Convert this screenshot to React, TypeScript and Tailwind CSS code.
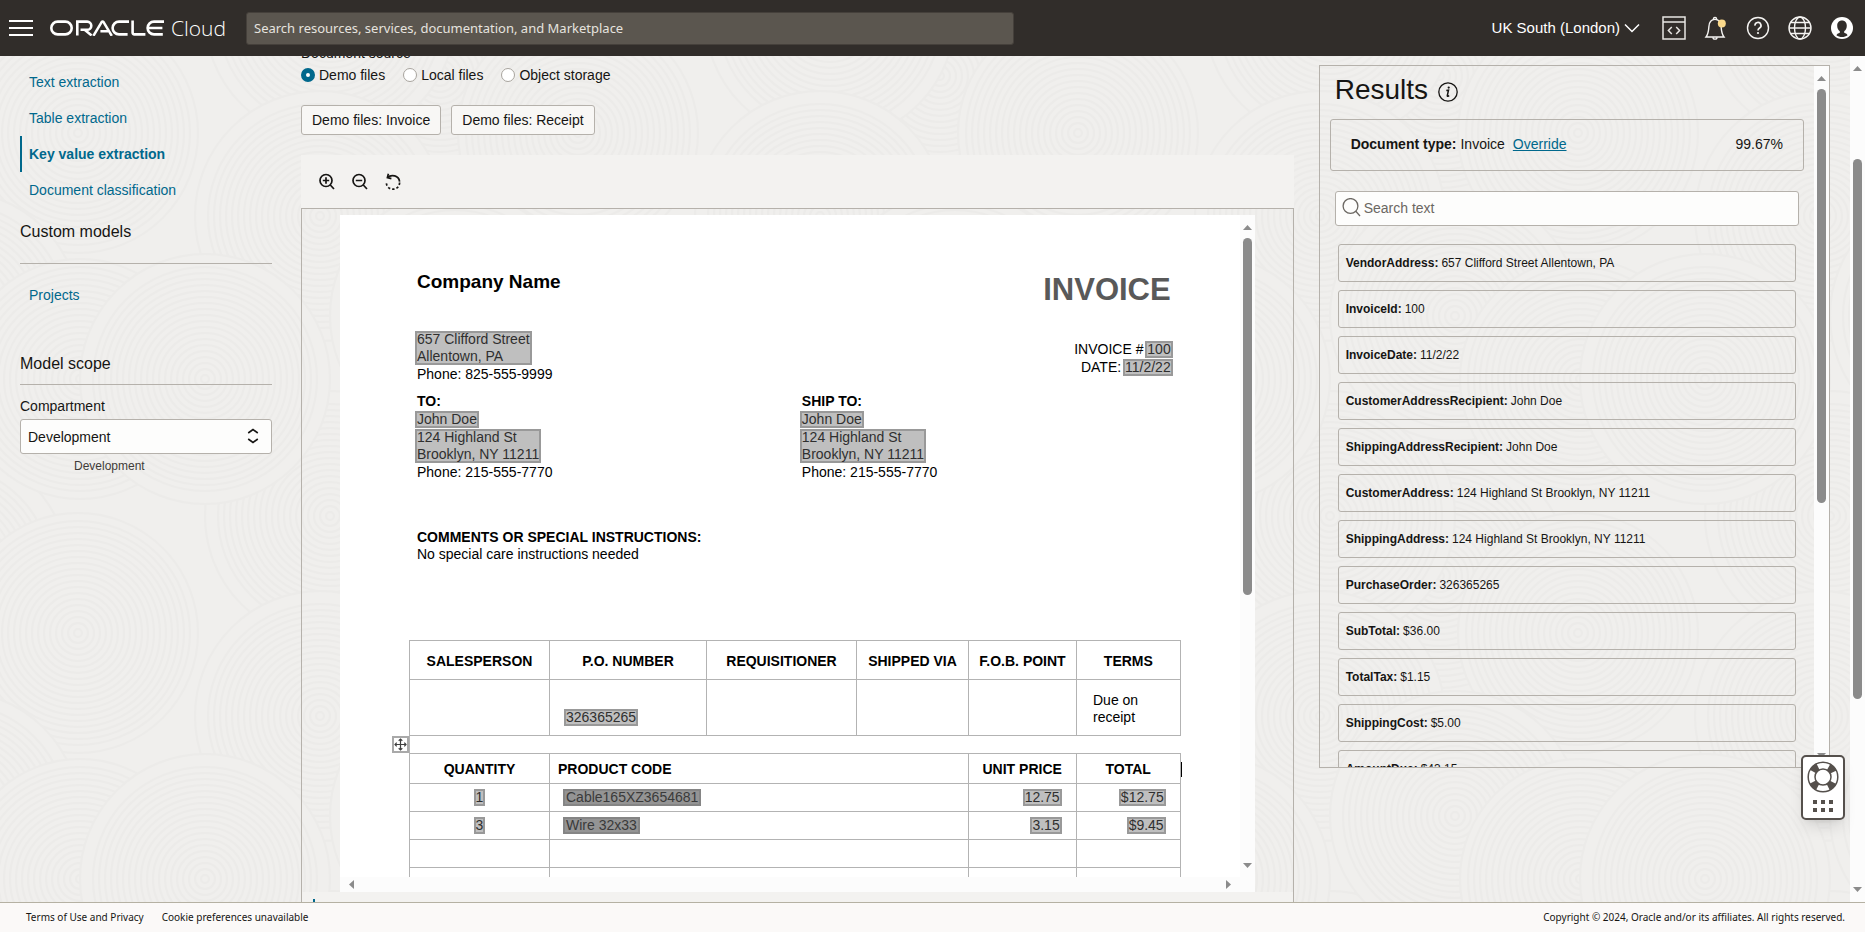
import type { ReactNode } from "react";

const disks = [
  { x: 440, y: 20, r: 130 },
  { x: 330, y: 460, r: 125 },
  { x: 78, y: 77, r: 120 },
  { x: 320, y: 160, r: 125 },
  { x: 455, y: 260, r: 125 },
  { x: 80, y: 323, r: 120 },
  { x: 205, y: 323, r: 125 },
];
const rings = [4, 10, 16, 22, 28, 34, 40, 46, 52, 58, 64, 70, 76, 82, 88, 94, 100, 106, 112];

function Texture() {
  return (
    <svg className="absolute inset-0 h-full w-full" aria-hidden="true">
      <defs>
        <pattern id="swirls" width="500" height="500" patternUnits="userSpaceOnUse">
          <rect width="500" height="500" fill="#f0efed" />
          {disks.map((d) =>
            [-500, 0, 500].map((dx) =>
              [-500, 0, 500].map((dy) => (
                <g key={`${d.x}${dx}${dy}`} fill="none" stroke="#ecebe9" strokeWidth="2">
                  <circle cx={d.x + dx} cy={d.y + dy} r={d.r} fill="#f0efed" />
                  {rings.map((r) => (
                    <circle key={r} cx={d.x + dx} cy={d.y + dy} r={r} />
                  ))}
                </g>
              ))
            )
          )}
        </pattern>
      </defs>
      <rect width="100%" height="100%" fill="url(#swirls)" />
    </svg>
  );
}

function OracleLogo() {
  return (
    <svg width="115" height="16" viewBox="0 0 115 16" fill="none" stroke="white" strokeWidth="2.6" role="img" aria-label="Oracle">
      <rect x="1.3" y="1.6" width="20.4" height="12.8" rx="6.4" />
      <path d="M27.3 15.6V1.6H37.2a4.1 4.1 0 0 1 0 8.2H30.5M34.6 9.8l7 5.6" />
      <path d="M43.4 15.8L51.6 2.2q1-1.2 2 0L61.8 15.8M50.4 11.2H58" />
      <path d="M79 1.6H69a6.4 6.4 0 0 0 0 12.8H77.6" />
      <path d="M82.6 0.4V12.6q0 1.8 1.8 1.8H95.4" />
      <path d="M114 1.6H104a6.4 6.4 0 0 0 0 12.8H112.8M98.4 8H112.4" />
    </svg>
  );
}

function CodeIcon() {
  return (
    <svg width="24" height="24" viewBox="0 0 24 24" fill="none" stroke="#e8e6e3" strokeWidth="1.5" aria-hidden="true">
      <rect x="1" y="1" width="22" height="22" />
      <path d="M1 6H23M9.8 11L6.4 14.5L9.8 18M14.2 11l3.4 3.5L14.2 18" />
    </svg>
  );
}

function BellIcon() {
  return (
    <svg width="24" height="24" viewBox="0 0 24 24" fill="none" stroke="#f5f4f2" strokeWidth="1.4" aria-hidden="true">
      <path d="M2 21C4.4 18 4.6 15 4.9 10.6 5.2 6 7.6 3.4 11 3.4s5.8 2.6 6.1 7.2C17.4 15 17.6 18 20 21Z" />
      <path d="M9.6 3.4a1.5 1.5 0 1 1 2.8 0M9 21.2a2 1.9 0 0 0 4 0" />
      <circle cx="17.8" cy="7.5" r="4" fill="#fbd98b" stroke="none" />
    </svg>
  );
}

function HelpIcon() {
  return (
    <svg width="24" height="24" viewBox="0 0 24 24" fill="none" stroke="#f5f4f2" strokeWidth="1.4" aria-hidden="true">
      <circle cx="12" cy="12" r="10.5" />
      <path d="M9 9.6a3 3 0 1 1 4.6 2.4c-1 .7-1.6 1.2-1.6 2.4" strokeWidth="1.7" />
      <circle cx="12" cy="17" r="1.1" fill="#f5f4f2" stroke="none" />
    </svg>
  );
}

function GlobeIcon() {
  return (
    <svg width="24" height="24" viewBox="0 0 24 24" fill="none" stroke="#f5f4f2" strokeWidth="1.4" aria-hidden="true">
      <circle cx="12" cy="12" r="11" />
      <ellipse cx="12" cy="12" rx="5.5" ry="11" />
      <path d="M1 12H23M3 6.5H21M3 17.5H21" />
    </svg>
  );
}

function UserIcon() {
  return (
    <svg width="24" height="24" viewBox="0 0 24 24" aria-hidden="true">
      <circle cx="12" cy="12" r="11" fill="#fff" />
      <path d="M12 4.6c-3 0-4.8 2.2-4.8 5.2 0 2.4 1 4.4 2.6 5.4v1.6c-1.4.5-2.6 1-3.4 2.4C8 20.4 9.9 21 12 21s4-.6 5.6-1.800c-.8-1.400-2-1.900-3.400-2.400v-1.600c1.600-1 2.600-3 2.600-5.400 0-3-1.800-5.200-4.800-5.200z" fill="#312d2a" />
    </svg>
  );
}

function ZoomIcon({ plus }: { plus?: boolean }) {
  return (
    <svg width="16" height="18" viewBox="0 0 16 18" fill="none" stroke="#161513" strokeWidth="1.7" aria-hidden="true">
      <circle cx="7" cy="7.5" r="6" />
      <path d={plus ? "M3.8 7.5h6.4M7 4.3v6.4M11.3 12l3.7 4" : "M3.8 7.5h6.4M11.3 12l3.7 4"} />
    </svg>
  );
}

function ResetIcon() {
  return (
    <svg width="16" height="18" viewBox="0 0 16 18" fill="none" stroke="#161513" strokeWidth="1.7" aria-hidden="true">
      <path d="M2.4 4.4C6.5 1 13.8 2.4 14.6 8.6" />
      <path d="M14.6 9.6C14.4 18.4 1.6 18.4 1.3 9.6" strokeDasharray="2.4 2" />
      <path d="M3.400 0.800L2.400 4.600L6.400 5.600" />
    </svg>
  );
}

function Arrow({ dir }: { dir: "up" | "down" | "left" | "right" }) {
  const paths = { up: "M0 7L4.5 2 9 7z", down: "M0 2L4.5 7 9 2z", left: "M7 0L2 4.5 7 9z", right: "M2 0L7 4.5 2 9z" };
  return (
    <svg width="9" height="9" viewBox="0 0 9 9" fill="#8b8b8b" className="shrink-0" aria-hidden="true">
      <path d={paths[dir]} />
    </svg>
  );
}

function Mark({ children, dark }: { children: ReactNode; dark?: boolean }) {
  return (
    <span className={dark ? "relative isolate inline-block text-[#3a3a3a]" : "relative isolate inline-block text-[#2f2f2f]"}>
      <span
        className={
          dark
            ? "absolute -inset-x-[3px] inset-y-0 -z-10 border-2 border-[#858585] bg-[#949494]"
            : "absolute -inset-x-[2px] inset-y-0 -z-10 border-2 border-[#999999] bg-[#bfbfbf]"
        }
      />
      {children}
    </span>
  );
}

const modelLinks = ["Text extraction", "Table extraction", "Key value extraction", "Document classification"];

function Sidebar() {
  return (
    <aside className="w-[252px] shrink-0 pt-2 text-sm leading-5">
      <nav>
        {modelLinks.map((label) => (
          <a
            key={label}
            href="#"
            aria-current={label === "Key value extraction" ? "page" : undefined}
            className="flex h-9 items-center border-l-2 border-transparent pl-[7px] text-[#00688c] aria-[current=page]:border-[#00688c] aria-[current=page]:font-bold"
          >
            {label}
          </a>
        ))}
        <h2 className="mt-3 border-b border-[#b5b1ab] pb-[19px] text-base leading-6">Custom models</h2>
        <a href="#" className="mt-[13px] flex h-9 items-center pl-[9px] text-[#00688c]">
          Projects
        </a>
      </nav>
      <h2 className="mt-[39px] border-b border-[#b5b1ab] pb-2 text-base leading-6">Model scope</h2>
      <label htmlFor="compartment" className="mt-[11px] block">
        Compartment
      </label>
      <div className="relative mt-[3px]">
        <select
          id="compartment"
          className="h-[35px] w-full appearance-none rounded-[3px] border border-[#b5b1ab] bg-[#fdfdfc] px-[7px]"
        >
          <option>Development</option>
        </select>
        <svg width="12" height="16" viewBox="0 0 12 16" fill="none" stroke="#161513" strokeWidth="1.6" className="pointer-events-none absolute top-[9px] right-[13px]" aria-hidden="true">
          <path d="M1.2 5L6 1.5 10.8 5M1.2 11L6 14.5 10.8 11" />
        </svg>
      </div>
      <p className="mt-1 pl-[54px] text-xs text-[#3f3c39]">Development</p>
    </aside>
  );
}

function Radio({ label, checked }: { label: string; checked?: boolean }) {
  return (
    <label className="flex items-center gap-1">
      <input
        type="radio"
        name="source"
        defaultChecked={checked}
        className="size-[14px] appearance-none rounded-full border border-[#a8a49e] bg-white checked:border-[5px] checked:border-[#00688c]"
      />
      {label}
    </label>
  );
}

function AddressBlock({ title }: { title: string }) {
  return (
    <div className="flex flex-col items-start gap-px">
      <b>{title}</b>
      <Mark>John Doe</Mark>
      <Mark>
        124 Highland St
        <br />
        Brooklyn, NY 11211
      </Mark>
      <span>Phone: 215-555-7770</span>
    </div>
  );
}

const cell = "border border-[#b3b3b3] font-normal";

function InvoicePage() {
  return (
    <div className="min-h-0 flex-1 overflow-hidden bg-white font-['Liberation_Sans',Arial,sans-serif] text-sm leading-[17px] text-black">
      <div className="flex justify-between pt-[55px] pr-[69px] pl-[77px]">
        <div className="flex flex-col items-start gap-px">
          <div className="text-[19px] leading-6 font-bold">Company Name</div>
          <div className="mt-9">
            <Mark>
              657 Clifford Street
              <br />
              Allentown, PA
            </Mark>
          </div>
          <div>Phone: 825-555-9999</div>
        </div>
        <div className="flex flex-col items-end gap-px">
          <div className="text-[31px] leading-10 font-bold text-[#595959]">INVOICE</div>
          <div className="mt-[30px]">
            INVOICE # <Mark>100</Mark>
          </div>
          <div>
            DATE: <Mark>11/2/22</Mark>
          </div>
        </div>
      </div>
      <div className="mt-[10px] grid grid-cols-2 gap-4 pr-[69px] pl-[77px]">
        <AddressBlock title="TO:" />
        <AddressBlock title="SHIP TO:" />
      </div>
      <div className="mt-12 pl-[77px]">
        <b>COMMENTS OR SPECIAL INSTRUCTIONS:</b>
        <p>No special care instructions needed</p>
      </div>
      <div className="mt-[77px] pr-[59px] pl-[69px]">
        <table className="w-full table-fixed border-collapse">
          <colgroup>
            <col className="w-[140px]" />
            <col className="w-[157px]" />
            <col className="w-[150px]" />
            <col className="w-[112px]" />
            <col className="w-[108px]" />
            <col />
          </colgroup>
          <thead>
            <tr className="h-[39px]">
              {["SALESPERSON", "P.O. NUMBER", "REQUISITIONER", "SHIPPED VIA", "F.O.B. POINT", "TERMS"].map((h) => (
                <th key={h} className="border border-[#b3b3b3] pt-0.5">
                  {h}
                </th>
              ))}
            </tr>
          </thead>
          <tbody>
            <tr className="h-14 align-bottom">
              <td className={cell} />
              <td className={`${cell} pb-[9px] pl-4`}>
                <Mark>326365265</Mark>
              </td>
              <td className={cell} />
              <td className={cell} />
              <td className={cell} />
              <td className={`${cell} pr-7 pb-[9px] pl-4`}>Due on receipt</td>
            </tr>
          </tbody>
        </table>
        <div className="relative h-[17px] border-l border-[#b3b3b3]">
          <span className="absolute top-0 -left-[18px] flex size-[17px] items-center justify-center border-2 border-[#a9a9a9] bg-white">
            <svg width="13" height="13" viewBox="0 0 13 13" fill="none" stroke="#404040" strokeWidth="1.2" className="shrink-0" aria-hidden="true">
              <path d="M6.5 1v11M1 6.5h11M4.7 2.7L6.5 1l1.8 1.7M4.7 10.3L6.5 12l1.8-1.7M2.7 4.7L1 6.5l1.7 1.8M10.3 4.7L12 6.5l-1.7 1.8" />
            </svg>
          </span>
        </div>
        <table className="w-full table-fixed border-collapse">
          <colgroup>
            <col className="w-[140px]" />
            <col />
            <col className="w-[108px]" />
            <col className="w-[104px]" />
          </colgroup>
          <thead>
            <tr className="h-[30px]">
              <th className="border border-[#b3b3b3] pt-0.5">QUANTITY</th>
              <th className="border border-[#b3b3b3] pt-0.5 pl-2 text-left">PRODUCT CODE</th>
              <th className="border border-[#b3b3b3] pt-0.5">UNIT PRICE</th>
              <th className="relative border border-[#b3b3b3] pt-0.5">
                TOTAL
                <span className="absolute top-2 -right-0.5 h-[15px] w-px bg-black" />
              </th>
            </tr>
          </thead>
          <tbody>
            {[
              ["1", "Cable165XZ3654681", "12.75", "$12.75"],
              ["3", "Wire 32x33", "3.15", "$9.45"],
            ].map(([qty, code, price, total]) => (
              <tr key={code} className="h-7">
                <td className={`${cell} text-center`}>
                  <Mark>{qty}</Mark>
                </td>
                <td className={`${cell} pl-4`}>
                  <Mark dark>{code}</Mark>
                </td>
                <td className={`${cell} pr-4 text-right`}>
                  <Mark>{price}</Mark>
                </td>
                <td className={`${cell} pr-4 text-right`}>
                  <Mark>{total}</Mark>
                </td>
              </tr>
            ))}
            {[0, 1].map((row) => (
              <tr key={row} className="h-7">
                <td className={cell} />
                <td className={cell} />
                <td className={cell} />
                <td className={cell} />
              </tr>
            ))}
          </tbody>
        </table>
      </div>
    </div>
  );
}

function Viewer() {
  return (
    <main className="mr-[25px] flex min-w-0 flex-[994_1_0%] flex-col overflow-hidden">
      <div className="-mt-[13px] text-sm leading-5">Document source</div>
      <div className="mt-0.5 flex shrink-0 gap-[18px] text-sm leading-5">
        <Radio label="Demo files" checked />
        <Radio label="Local files" />
        <Radio label="Object storage" />
      </div>
      <div className="mt-5 flex shrink-0 gap-[10px]">
        {["Demo files: Invoice", "Demo files: Receipt"].map((label) => (
          <button key={label} type="button" className="h-[30px] rounded-[3px] border border-[#b5b1ab] bg-[#f8f7f5] px-[10px] text-sm">
            {label}
          </button>
        ))}
      </div>
      <div className="mt-5 flex h-[53px] shrink-0 items-center gap-[17px] bg-[#f3f2f0] px-[18px]">
        <button type="button" aria-label="Zoom in">
          <ZoomIcon plus />
        </button>
        <button type="button" aria-label="Zoom out">
          <ZoomIcon />
        </button>
        <button type="button" aria-label="Reset zoom">
          <ResetIcon />
        </button>
      </div>
      <div className="flex min-h-0 flex-1 flex-col border-x border-t border-[#b5b1ab] pt-[6px]">
        <div className="mx-[38px] flex min-h-0 flex-1 bg-[#fcfcfc]">
          <div className="flex min-w-0 flex-1 flex-col">
            <InvoicePage />
            <div className="flex h-[15px] shrink-0 items-center justify-between px-[7px]">
              <Arrow dir="left" />
              <Arrow dir="right" />
            </div>
          </div>
          <div className="flex w-[15px] shrink-0 flex-col items-center pt-2 pb-[22px]">
            <Arrow dir="up" />
            <div className="mt-[6px] mb-auto h-[357px] w-[9px] rounded-full bg-[#8b8b8b]" />
            <Arrow dir="down" />
          </div>
        </div>
        <div className="flex h-[10px] shrink-0 items-end bg-[#f3f2f0] pl-[11px]">
          <span className="h-[3px] w-0.5 bg-[#00688c]" />
        </div>
      </div>
    </main>
  );
}

const fields = [
  ["VendorAddress", "657 Clifford Street Allentown, PA"],
  ["InvoiceId", "100"],
  ["InvoiceDate", "11/2/22"],
  ["CustomerAddressRecipient", "John Doe"],
  ["ShippingAddressRecipient", "John Doe"],
  ["CustomerAddress", "124 Highland St Brooklyn, NY 11211"],
  ["ShippingAddress", "124 Highland St Brooklyn, NY 11211"],
  ["PurchaseOrder", "326365265"],
  ["SubTotal", "$36.00"],
  ["TotalTax", "$1.15"],
  ["ShippingCost", "$5.00"],
  ["AmountDue", "$43.15"],
];

function Results() {
  return (
    <section className="mt-[9px] flex h-[703px] min-w-0 flex-[510_1_0%] overflow-hidden border border-[#b5b1ab]">
      <div className="min-w-0 flex-1 px-[10px]">
        <div className="flex items-center gap-[10px] pt-[6px] pl-[5px]">
          <h1 className="text-[28px] leading-9">Results</h1>
          <button type="button" aria-label="About results" className="pt-1">
            <svg width="20" height="20" viewBox="0 0 20 20" fill="none" stroke="#161513" strokeWidth="1.3" aria-hidden="true">
              <circle cx="10" cy="10" r="9.2" />
              <path d="M8.3 8.6l2.2-.4-1.2 5.4q-.1.9.7.6l1.2-.6" strokeWidth="1.5" />
              <circle cx="10.7" cy="5.6" r="1.1" fill="#161513" stroke="none" />
            </svg>
          </button>
        </div>
        <div className="mt-[11px] flex h-[52px] items-center rounded-[3px] border border-[#b5b1ab] px-5 pb-0.5 text-sm">
          <b className="mr-1">Document type:</b> Invoice
          <a href="#" className="ml-2 text-[#00688c] underline">
            Override
          </a>
          <span className="ml-auto">99.67%</span>
        </div>
        <div className="relative mx-[5px] mt-5">
          <input
            type="text"
            aria-label="Search text"
            placeholder="Search text"
            className="h-[35px] w-full rounded-[3px] border border-[#b5b1ab] bg-[#fdfdfc] pb-0.5 pl-7 text-sm placeholder:text-[#6b6762]"
          />
          <svg width="19" height="19" viewBox="0 0 19 19" fill="none" stroke="#6b6762" strokeWidth="1.3" className="absolute top-[7px] left-[7px]" aria-hidden="true">
            <circle cx="8.5" cy="8" r="7.4" />
            <path d="M13.8 13.2L18 18" />
          </svg>
        </div>
        <ul className="mx-2 mt-[18px] flex flex-col gap-2 text-xs">
          {fields.map(([name, value]) => (
            <li key={name} className="flex h-[38px] shrink-0 items-center gap-[3px] rounded-[3px] border border-[#b5b1ab] px-[7px]">
              <b>{name}:</b>
              <span>{value}</span>
            </li>
          ))}
        </ul>
      </div>
      <div className="flex w-[15px] shrink-0 flex-col items-center bg-[#fcfcfc] pt-2 pb-[7px]">
        <Arrow dir="up" />
        <div className="mt-[6px] mb-auto h-[414px] w-[9px] shrink-0 rounded-full bg-[#8b8b8b]" />
        <Arrow dir="down" />
      </div>
    </section>
  );
}

export default function App() {
  return (
    <div className="flex h-screen flex-col overflow-hidden bg-[#f0efed] font-['Liberation_Sans',Arial,sans-serif] text-[#161513]">
      <header className="flex h-14 shrink-0 items-center bg-[#312d2a] pr-[11px] pl-[9px] text-white">
        <button type="button" aria-label="Navigation menu" className="flex flex-col gap-[5px]">
          <span className="h-0.5 w-6 bg-white" />
          <span className="h-0.5 w-6 bg-white" />
          <span className="h-0.5 w-6 bg-white" />
        </button>
        <a href="#" className="ml-[17px] flex items-center gap-[6px]">
          <OracleLogo />
          <span className="font-['Open_Sans',sans-serif] text-[21px] leading-7 font-light">Cloud</span>
        </a>
        <input
          type="search"
          aria-label="Search"
          placeholder="Search resources, services, documentation, and Marketplace"
          className="ml-5 h-[33px] w-[768px] rounded-[3px] border border-[#45403b] bg-[#5b564f] px-[7px] font-['Noto_Sans',sans-serif] text-[13px] placeholder:text-[#e6e3df]"
        />
        <button type="button" className="ml-auto flex items-center gap-1 text-[15px]">
          UK South (London)
          <svg width="16" height="10" viewBox="0 0 16 10" fill="none" stroke="white" strokeWidth="1.5" aria-hidden="true">
            <path d="M1 1.5l7 7 7-7" />
          </svg>
        </button>
        <div className="ml-[22px] flex gap-[18px]">
          <button type="button" aria-label="Developer tools">
            <CodeIcon />
          </button>
          <button type="button" aria-label="Announcements">
            <BellIcon />
          </button>
          <button type="button" aria-label="Help">
            <HelpIcon />
          </button>
          <button type="button" aria-label="Language">
            <GlobeIcon />
          </button>
          <button type="button" aria-label="Profile">
            <UserIcon />
          </button>
        </div>
      </header>
      <div className="relative isolate flex min-h-0 flex-1">
        <div className="absolute inset-0 -z-10">
          <Texture />
        </div>
        <div className="flex min-w-0 flex-1 pr-5 pl-5">
          <Sidebar />
          <div className="w-[29px] shrink-0" />
          <Viewer />
          <Results />
        </div>
        <div className="flex w-[15px] shrink-0 flex-col items-center bg-[#fcfcfc] pt-2 pb-2">
          <Arrow dir="up" />
          <div className="mt-[86px] mb-auto h-[540px] w-[9px] rounded-full bg-[#8b8b8b]" />
          <Arrow dir="down" />
        </div>
        <button
          type="button"
          aria-label="Support"
          className="absolute right-5 bottom-[82px] flex h-[65px] w-11 flex-col items-center gap-[7px] rounded-[5px] border-2 border-[#55504c] bg-white pt-1 shadow-lg"
        >
          <svg width="32" height="32" viewBox="0 0 32 32" fill="none" stroke="#55504c" strokeWidth="1.5" className="shrink-0" aria-hidden="true">
            <circle cx="16" cy="16" r="11.2" strokeWidth="7.6" strokeDasharray="6.8 10.79" strokeDashoffset="-5.4" />
            <circle cx="16" cy="16" r="14.8" />
            <circle cx="16" cy="16" r="8" />
          </svg>
          <svg width="20" height="12" viewBox="0 0 20 12" fill="#55504c" className="shrink-0" aria-hidden="true">
            <path d="M0 0h4v4H0zM8 0h4v4H8zM16 0h4v4h-4zM0 8h4v4H0zM8 8h4v4H8zM16 8h4v4h-4z" />
          </svg>
        </button>
      </div>
      <footer className="flex h-[30px] shrink-0 items-center gap-[18px] border-t border-[#b5b1a3] bg-[#fbf9f8] pr-5 pl-[26px] font-['Noto_Sans',sans-serif] text-[10px]">
        <a href="#">Terms of Use and Privacy</a>
        <a href="#">Cookie preferences unavailable</a>
        <span className="ml-auto">Copyright © 2024, Oracle and/or its affiliates. All rights reserved.</span>
      </footer>
    </div>
  );
}
